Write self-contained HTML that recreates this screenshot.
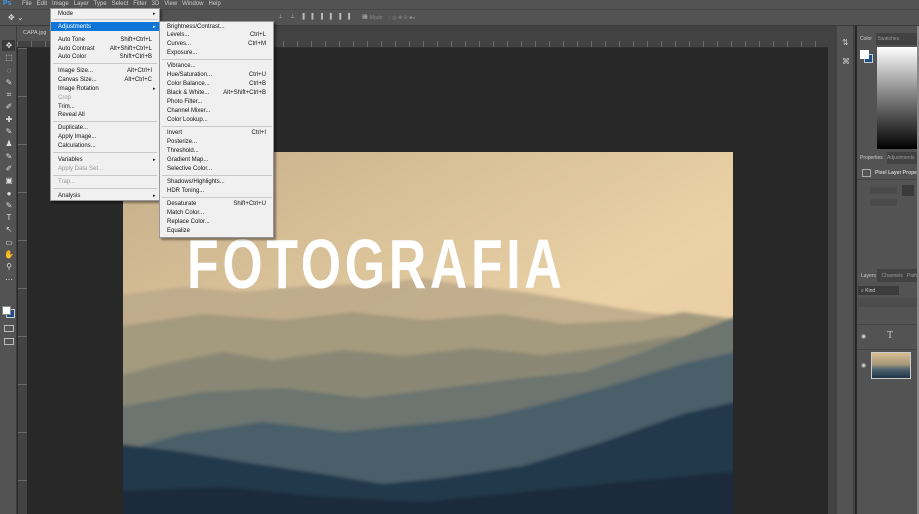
<!DOCTYPE html>
<html><head><meta charset="utf-8"><style>
*{margin:0;padding:0;box-sizing:border-box}
body{width:919px;height:514px;overflow:hidden;background:#282828;font-family:"Liberation Sans",sans-serif;position:relative}
.a{position:absolute}
.m{font-size:6px;color:#111;white-space:nowrap;line-height:8px}
.g{color:#999}
.sep{position:absolute;height:1px;background:#c9c9c9}
.t{font-size:5.5px;color:#ccc;white-space:nowrap}
</style></head><body>
<div class="a" style="left:0;top:0;width:919px;height:9px;background:#535353"></div>
<div class="a" style="left:3px;top:0;font-size:7px;color:#3d9be9;font-weight:bold">Ps</div>
<div class="a t" style="left:22px;top:1px;font-size:6px">File&nbsp;&nbsp; Edit&nbsp;&nbsp; Image&nbsp;&nbsp; Layer&nbsp;&nbsp; Type&nbsp;&nbsp; Select&nbsp;&nbsp; Filter&nbsp;&nbsp; 3D&nbsp;&nbsp; View&nbsp;&nbsp; Window&nbsp;&nbsp; Help</div>
<div class="a" style="left:0;top:9px;width:919px;height:17px;background:#535353;border-top:1px solid #464646;border-bottom:1px solid #3a3a3a"></div>
<div class="a t" style="left:8px;top:13px;font-size:8px;color:#ddd">✥ ⌄</div>
<div class="a t" style="left:278px;top:14px;color:#bbb;letter-spacing:3px">⊥ ⊥ ▌▐ ▌▐ ▌▐ &nbsp;▦</div>
<div class="a t" style="left:362px;top:15px;color:#888;font-size:5px">3D Mode:&nbsp;&nbsp; ◌ ◎ ✥ ✣ ■◂</div>
<div class="a" style="left:17px;top:26px;width:811px;height:15px;background:#424242"></div>
<div class="a" style="left:17px;top:26px;width:40px;height:15px;background:#535353"></div>
<div class="a t" style="left:23px;top:30px">CAPA.jpg</div>
<div class="a" style="left:17px;top:41px;width:811px;height:7px;background:#424242;border-bottom:1px solid #2e2e2e;background-image:repeating-linear-gradient(90deg,#6a6a6a 0 1px,transparent 1px 14px)"></div>
<div class="a" style="left:18px;top:48px;width:9px;height:466px;background:#424242;background-image:repeating-linear-gradient(180deg,#6a6a6a 0 1px,transparent 1px 48px)"></div>
<div class="a" style="left:0;top:26px;width:17px;height:488px;background:#535353;border-right:1px solid #3a3a3a"></div>
<div class="a" style="left:2px;top:40px;width:13px;height:11px;background:#3a3a3a"></div>
<div class="a" style="left:3px;top:40px;font-size:8px;line-height:12.3px;color:#ddd;width:12px;text-align:center">✥<br>⬚<br>◌<br>✎<br>⌗<br>✐<br>✚<br>✎<br>♟<br>✎<br>✐<br>▣<br>●<br>✎<br>T<br>↖<br>▭<br>✋<br>⚲<br>⋯</div>
<div class="a" style="left:6px;top:309px;width:9px;height:9px;background:#1e4e88;border:1px solid #ccc"></div>
<div class="a" style="left:2px;top:306px;width:9px;height:9px;background:#fff;border:1px solid #888"></div>
<div class="a" style="left:4px;top:325px;width:10px;height:7px;border:1px solid #bbb"></div>
<div class="a" style="left:4px;top:338px;width:10px;height:7px;border:1px solid #bbb"></div>
<div class="a" style="left:828px;top:26px;width:9px;height:488px;background:#424242"></div>
<div class="a" style="left:837px;top:26px;width:18px;height:488px;background:#535353;border-right:2px solid #404040"></div>
<div class="a t" style="left:842px;top:38px;font-size:8px">⇅</div>
<div class="a t" style="left:842px;top:57px;font-size:8px">⌘</div>
<div class="a" style="left:857px;top:26px;width:62px;height:488px;background:#535353"></div>
<div class="a" style="left:857px;top:33px;width:62px;height:12px;background:#424242"></div>
<div class="a" style="left:857px;top:33px;width:19px;height:12px;background:#535353"></div>
<div class="a t" style="left:860px;top:36px;font-size:5px">Color&nbsp;&nbsp;&nbsp;&nbsp;<span style="color:#999">Swatches</span></div>
<div class="a" style="left:864px;top:54px;width:9px;height:9px;background:#1e4e88;border:1px solid #ccc"></div>
<div class="a" style="left:860px;top:50px;width:9px;height:9px;background:#fff"></div>
<div class="a" style="left:877px;top:47px;width:42px;height:102px;background:linear-gradient(180deg,#fff,#888 45%,#000)"></div>
<div class="a" style="left:857px;top:152px;width:62px;height:12px;background:#424242"></div>
<div class="a" style="left:857px;top:152px;width:30px;height:12px;background:#535353"></div>
<div class="a t" style="left:860px;top:155px;font-size:5px">Properties&nbsp;&nbsp;&nbsp;<span style="color:#999">Adjustments</span></div>
<div class="a" style="left:862px;top:169px;width:9px;height:8px;border:1px solid #aaa"></div>
<div class="a t" style="left:875px;top:170px;font-size:5px;font-weight:bold">Pixel Layer Properties</div>
<div class="a" style="left:857px;top:179px;width:62px;height:1px;background:#444"></div>
<div class="a" style="left:870px;top:187px;width:27px;height:7px;background:#4a4a4a"></div>
<div class="a" style="left:902px;top:185px;width:12px;height:11px;background:#3a3a3a"></div>
<div class="a" style="left:870px;top:199px;width:27px;height:7px;background:#4a4a4a"></div>
<div class="a" style="left:857px;top:269px;width:62px;height:13px;background:#424242"></div>
<div class="a" style="left:857px;top:269px;width:20px;height:13px;background:#535353"></div>
<div class="a t" style="left:861px;top:273px;font-size:5px">Layers&nbsp;&nbsp;&nbsp;&nbsp;<span style="color:#999">Channels&nbsp;&nbsp;&nbsp;Paths</span></div>
<div class="a" style="left:858px;top:286px;width:41px;height:9px;background:#3c3c3c"></div>
<div class="a t" style="left:861px;top:288px;font-size:5px">⌕ Kind</div>
<div class="a" style="left:858px;top:298px;width:61px;height:9px;background:#4c4c4c"></div>
<div class="a" style="left:857px;top:324px;width:62px;height:1px;background:#444"></div>
<div class="a t" style="left:861px;top:333px;font-size:6px">◉</div>
<div class="a t" style="left:887px;top:330px;font-size:10px;font-family:'Liberation Serif',serif">T</div>
<div class="a" style="left:857px;top:349px;width:62px;height:1px;background:#444"></div>
<div class="a t" style="left:861px;top:362px;font-size:6px">◉</div>
<div class="a" style="left:871px;top:352px;width:40px;height:27px;border:1px solid #ccc;background:linear-gradient(180deg,#d9bc8f,#a89a7c 45%,#4f6370 65%,#1f3447)"></div>
<div class="a" style="left:917px;top:26px;width:2px;height:488px;background:#888"></div>
<svg class="a" style="left:123px;top:152px" width="610" height="362" viewBox="0 0 610 362">
<defs><linearGradient id="sk" x1="0" y1="0" x2="1" y2="1"><stop offset="0" stop-color="#c5ae8a"/><stop offset=".6" stop-color="#ebd2a6"/><stop offset="1" stop-color="#e4c79c"/></linearGradient>
<filter id="b" x="-5%" y="-5%" width="110%" height="110%"><feGaussianBlur stdDeviation="1.5"/></filter></defs>
<rect width="610" height="362" fill="url(#sk)"/>
<g filter="url(#b)">
<path d="M-20 145 L60 135 L120 140 L180 134 L250 132 L300 126 L340 133 L400 140 L460 150 L520 160 L630 172 L630 380 L-20 380Z" fill="#bca988" opacity=".85"/>
<path d="M-20 177 L80 162 L160 168 L230 160 L300 168 L380 162 L440 172 L520 168 L560 160 L630 170 L630 380 L-20 380Z" fill="#a49a7e"/>
<path d="M-20 228 L40 212 L100 200 L150 208 L220 198 L280 204 L350 196 L420 203 L480 196 L540 186 L630 178 L630 380 L-20 380Z" fill="#8a8875"/>
<path d="M-20 258 L80 240 L160 236 L240 246 L320 236 L400 226 L460 220 L520 200 L630 158 L630 380 L-20 380Z" fill="#6c7570"/>
<path d="M-20 305 L60 282 L140 270 L220 280 L300 272 L360 266 L420 252 L480 236 L560 212 L630 196 L630 380 L-20 380Z" fill="#4a5e69"/>
<path d="M-20 290 L60 300 L120 310 L200 322 L260 332 L320 326 L400 314 L480 290 L560 262 L630 246 L630 380 L-20 380Z" fill="#24394c"/>
<path d="M-20 340 L100 335 L200 345 L300 350 L400 340 L500 330 L630 318 L630 380 L-20 380Z" fill="#1a2c3d"/>
</g>
</svg>
<div class="a" style="left:187px;top:226px;font-size:70px;font-weight:bold;color:#fff;letter-spacing:5px;transform:scaleX(.74);transform-origin:0 0;line-height:76px;white-space:nowrap">FOTOGRAFIA</div>
<div class="a" style="left:50px;top:8px;width:110px;height:193px;background:#f0f0f0;border:1px solid #979797;box-shadow:2px 2px 2px rgba(0,0,0,.4)"></div>
<div class="a" style="left:51px;top:22px;width:108px;height:9px;background:#0f76d7"></div>
<div class="a m" style="left:58px;top:10px">Mode</div>
<div class="a m" style="left:58px;top:23px;color:#fff">Adjustments</div>
<div class="a m" style="left:58px;top:36px">Auto Tone</div>
<div class="a m" style="left:58px;top:45px">Auto Contrast</div>
<div class="a m" style="left:58px;top:53px">Auto Color</div>
<div class="a m" style="left:58px;top:67px">Image Size...</div>
<div class="a m" style="left:58px;top:76px">Canvas Size...</div>
<div class="a m" style="left:58px;top:85px">Image Rotation</div>
<div class="a m g" style="left:58px;top:94px">Crop</div>
<div class="a m" style="left:58px;top:103px">Trim...</div>
<div class="a m" style="left:58px;top:111px">Reveal All</div>
<div class="a m" style="left:58px;top:124px">Duplicate...</div>
<div class="a m" style="left:58px;top:133px">Apply Image...</div>
<div class="a m" style="left:58px;top:142px">Calculations...</div>
<div class="a m" style="left:58px;top:156px">Variables</div>
<div class="a m g" style="left:58px;top:165px">Apply Data Set...</div>
<div class="a m g" style="left:58px;top:178px">Trap...</div>
<div class="a m" style="left:58px;top:192px">Analysis</div>
<div class="a m" style="left:110px;top:36px;width:42px;text-align:right">Shift+Ctrl+L</div>
<div class="a m" style="left:100px;top:45px;width:52px;text-align:right">Alt+Shift+Ctrl+L</div>
<div class="a m" style="left:110px;top:53px;width:42px;text-align:right">Shift+Ctrl+B</div>
<div class="a m" style="left:110px;top:67px;width:42px;text-align:right">Alt+Ctrl+I</div>
<div class="a m" style="left:110px;top:76px;width:42px;text-align:right">Alt+Ctrl+C</div>
<div class="a m" style="left:153px;top:10px;font-size:5px">▸</div>
<div class="a m" style="left:153px;top:23px;font-size:5px;color:#fff">▸</div>
<div class="a m" style="left:153px;top:85px;font-size:5px">▸</div>
<div class="a m" style="left:153px;top:156px;font-size:5px">▸</div>
<div class="a m" style="left:153px;top:192px;font-size:5px">▸</div>
<div class="sep" style="left:53px;top:19px;width:104px"></div>
<div class="sep" style="left:53px;top:63px;width:104px"></div>
<div class="sep" style="left:53px;top:121px;width:104px"></div>
<div class="sep" style="left:53px;top:152px;width:104px"></div>
<div class="sep" style="left:53px;top:175px;width:104px"></div>
<div class="sep" style="left:53px;top:188px;width:104px"></div>
<div class="a" style="left:159px;top:21px;width:115px;height:217px;background:#f0f0f0;border:1px solid #979797;box-shadow:2px 2px 2px rgba(0,0,0,.4)"></div>
<div class="a m" style="left:167px;top:23px">Brightness/Contrast...</div>
<div class="a m" style="left:167px;top:31px">Levels...</div>
<div class="a m" style="left:167px;top:40px">Curves...</div>
<div class="a m" style="left:167px;top:49px">Exposure...</div>
<div class="a m" style="left:167px;top:62px">Vibrance...</div>
<div class="a m" style="left:167px;top:71px">Hue/Saturation...</div>
<div class="a m" style="left:167px;top:80px">Color Balance...</div>
<div class="a m" style="left:167px;top:89px">Black &amp; White...</div>
<div class="a m" style="left:167px;top:98px">Photo Filter...</div>
<div class="a m" style="left:167px;top:107px">Channel Mixer...</div>
<div class="a m" style="left:167px;top:116px">Color Lookup...</div>
<div class="a m" style="left:167px;top:129px">Invert</div>
<div class="a m" style="left:167px;top:138px">Posterize...</div>
<div class="a m" style="left:167px;top:147px">Threshold...</div>
<div class="a m" style="left:167px;top:156px">Gradient Map...</div>
<div class="a m" style="left:167px;top:165px">Selective Color...</div>
<div class="a m" style="left:167px;top:178px">Shadows/Highlights...</div>
<div class="a m" style="left:167px;top:187px">HDR Toning...</div>
<div class="a m" style="left:167px;top:200px">Desaturate</div>
<div class="a m" style="left:167px;top:209px">Match Color...</div>
<div class="a m" style="left:167px;top:218px">Replace Color...</div>
<div class="a m" style="left:167px;top:227px">Equalize</div>
<div class="a m" style="left:216px;top:31px;width:50px;text-align:right">Ctrl+L</div>
<div class="a m" style="left:216px;top:40px;width:50px;text-align:right">Ctrl+M</div>
<div class="a m" style="left:216px;top:71px;width:50px;text-align:right">Ctrl+U</div>
<div class="a m" style="left:216px;top:80px;width:50px;text-align:right">Ctrl+B</div>
<div class="a m" style="left:206px;top:89px;width:60px;text-align:right">Alt+Shift+Ctrl+B</div>
<div class="a m" style="left:216px;top:129px;width:50px;text-align:right">Ctrl+I</div>
<div class="a m" style="left:216px;top:200px;width:50px;text-align:right">Shift+Ctrl+U</div>
<div class="sep" style="left:162px;top:59px;width:110px"></div>
<div class="sep" style="left:162px;top:126px;width:110px"></div>
<div class="sep" style="left:162px;top:175px;width:110px"></div>
<div class="sep" style="left:162px;top:197px;width:110px"></div>
</body></html>
